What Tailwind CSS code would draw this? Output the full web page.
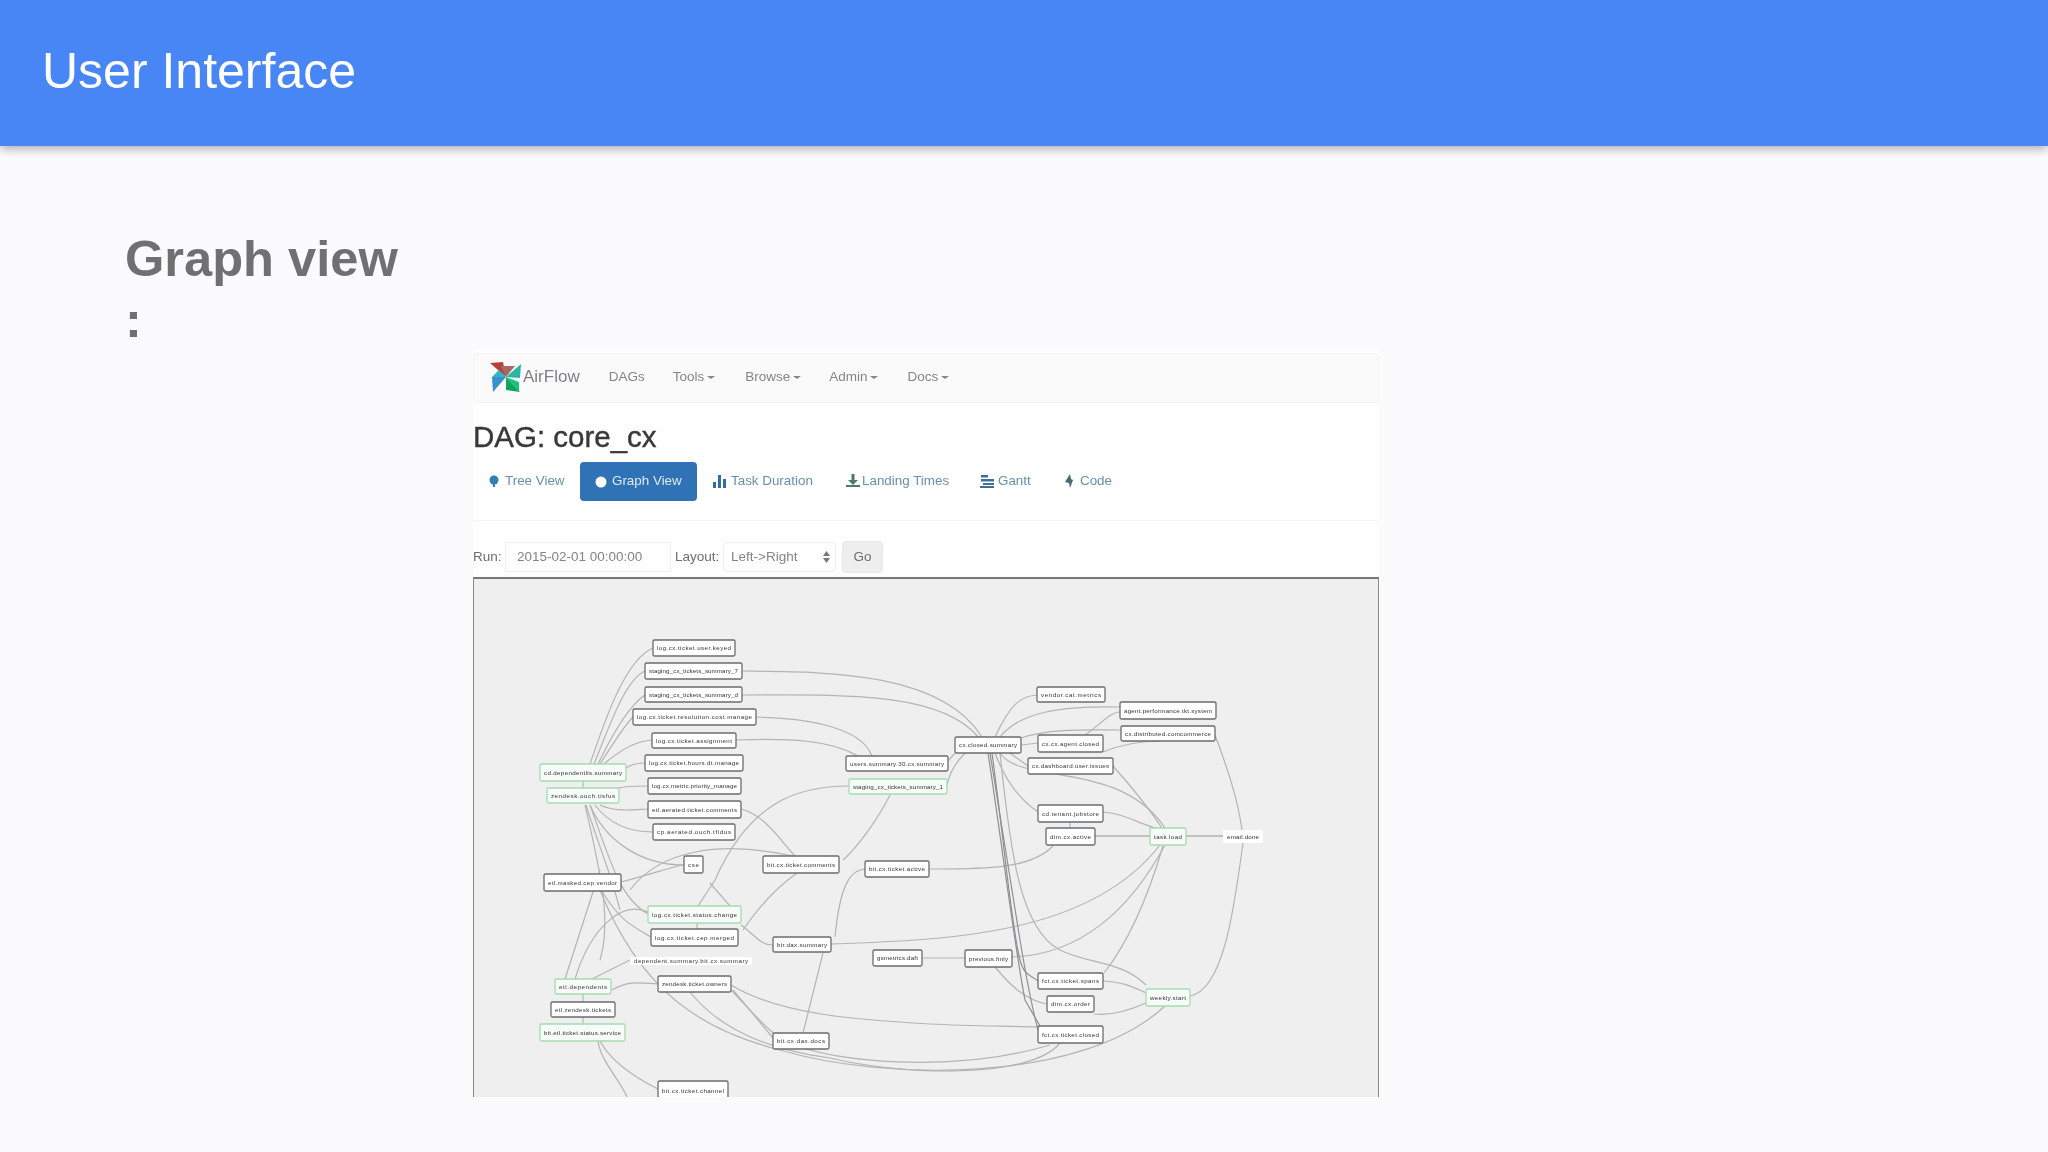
<!DOCTYPE html>
<html lang="en">
<head>
    <meta charset="UTF-8">
    <title>User Interface</title>
    <script src="https://cdn.jsdelivr.net/npm/@tailwindcss/browser@4"></script>
</head>
<body class="bg-[#fbfafc] font-['Liberation_Sans',sans-serif] w-[2048px] h-[1152px] overflow-hidden">
    <header class="h-[146px] bg-[#4885f5] pl-[42px] pt-[41px] shadow-[0_3px_9px_rgba(0,0,0,0.3)] relative">
        <h1 class="text-[50px] leading-[60px] text-white">User Interface</h1>
    </header>

    <main class="pt-[82px]">
        <h2 class="pl-[125px] text-[50.6px] leading-[61px] font-bold text-[#707073] w-[500px]">Graph view<br>:</h2>

        <!-- airflow screenshot -->
        <div class="ml-[473px] w-[906px] h-[747px] bg-[#fefefe] overflow-hidden blur-[0.75px]">
            <nav class="mt-[3px] h-[50px] pb-[2px] bg-[#fbfafb] border border-[#f5f4f5] rounded flex items-center text-[13.5px] text-[#858588]">
                <svg class="ml-[15px] w-[34px] h-[34px]" viewBox="0 0 34 34">
                    <polygon points="17,17 1,3 14,2" fill="#b8403c"/>
                    <polygon points="17,17 12,6 26,6" fill="#a56a66"/>
                    <polygon points="17,17 32,4 31,18" fill="#2bb5a5"/>
                    <polygon points="17,17 31,32 17,30" fill="#12a35c"/>
                    <polygon points="17,17 30,22 30,32" fill="#1fc47c"/>
                    <polygon points="17,17 4,32 3,17" fill="#3a8fd0"/>
                    <polygon points="17,17 3,17 10,10" fill="#2fb3c8"/>
                </svg>
                <span class="text-[17px] text-[#808085]">AirFlow</span>
                <span class="ml-[29px]">DAGs</span>
                <span class="ml-[28px] flex items-center">Tools<i class="ml-[3px] border-x-[4px] border-t-[3px] border-x-transparent border-t-[#858588]"></i></span>
                <span class="ml-[30px] flex items-center">Browse<i class="ml-[3px] border-x-[4px] border-t-[3px] border-x-transparent border-t-[#858588]"></i></span>
                <span class="ml-[28px] flex items-center">Admin<i class="ml-[3px] border-x-[4px] border-t-[3px] border-x-transparent border-t-[#858588]"></i></span>
                <span class="ml-[29px] flex items-center">Docs<i class="ml-[3px] border-x-[4px] border-t-[3px] border-x-transparent border-t-[#858588]"></i></span>
            </nav>

            <div class="mt-[16px] text-[29.5px] leading-[36px] text-[#38383a] [-webkit-text-stroke:0.4px_#38383a]">DAG: core_cx</div>

            <div class="mt-[7px] h-[39px] flex items-center text-[13.4px] text-[#6a8fac]">
                <span class="ml-[15px] flex items-center gap-[5px] w-[92px]">
                    <svg class="w-[12px] h-[12px]" viewBox="0 0 12 12"><circle cx="6" cy="5" r="4.5" fill="#2f7fb0"/><rect x="5" y="8" width="2" height="4" fill="#2f7fb0"/></svg>
                    Tree View
                </span>
                <span class="h-[39px] w-[117px] rounded bg-[#2f72b5] text-[#dfe9f3] flex items-center pl-[15px] gap-[5px]">
                    <svg class="w-[12px] h-[12px]" viewBox="0 0 12 12"><circle cx="6" cy="6" r="5.5" fill="#fff"/></svg>
                    Graph View
                </span>
                <span class="ml-[16px] flex items-center gap-[4px] w-[133px]">
                    <svg class="w-[14px] h-[14px]" viewBox="0 0 14 14" fill="#2f6f9f"><rect x="0" y="8" width="3" height="6"/><rect x="5" y="1" width="3" height="13"/><rect x="10" y="5" width="3" height="9"/></svg>
                    Task Duration
                </span>
                <span class="flex items-center gap-[2px] w-[134px]">
                    <svg class="w-[14px] h-[14px]" viewBox="0 0 14 14" fill="#4a7a70"><rect x="5.5" y="0" width="3" height="7"/><polygon points="2,6 12,6 7,11"/><rect x="0" y="11" width="14" height="2"/></svg>
                    Landing Times
                </span>
                <span class="flex items-center gap-[4px] w-[85px]">
                    <svg class="w-[14px] h-[14px]" viewBox="0 0 14 14" fill="#3f6f94"><rect x="1" y="1" width="7" height="2.5"/><rect x="1" y="5" width="13" height="2.5"/><rect x="3" y="9" width="11" height="2"/><rect x="0" y="12" width="14" height="2"/></svg>
                    Gantt
                </span>
                <span class="flex items-center gap-[7px]">
                    <svg class="w-[8px] h-[14px]" viewBox="0 0 8 14" fill="#4a6a72"><polygon points="5,0 6,5 8,6 5,14 4,9 0,8"/></svg>
                    Code
                </span>
            </div>

            <div class="mt-[19px] border-t border-[#f4f4f5]"></div>

            <form class="mt-[20px] h-[32px] flex items-center text-[13.5px] text-[#6d6d70]">
                <span class="w-[32px]">Run:</span>
                <span class="h-[30px] w-[166px] border border-[#eeeeef] flex items-center pl-[11px] text-[#858588]">2015-02-01 00:00:00</span>
                <span class="ml-[4px] w-[48px]">Layout:</span>
                <span class="h-[30px] w-[113px] border border-[#eeeeef] rounded flex items-center justify-between pl-[7px] pr-[5px] text-[#858588]">
                    Left-&gt;Right
                    <svg class="w-[7px] h-[12px]" viewBox="0 0 7 12" fill="#777"><polygon points="3.5,0 7,5 0,5"/><polygon points="0,7 7,7 3.5,12"/></svg>
                </span>
                <span class="ml-[6px] h-[32px] w-[41px] bg-[#eeeeef] border border-[#e8e8e9] rounded flex items-center justify-center">Go</span>
            </form>

            <!-- dag canvas -->
            <div class="mt-[4px] w-[906px] h-[520px] bg-[#efeff0] border-x border-x-[#8a8a8c] border-t-2 border-t-[#77777a] overflow-hidden">
                <svg class="block -ml-px -mt-[2px]" width="906" height="520" viewBox="473 577 906 520">
                    <g class="fill-none stroke-[#b4b4b6] stroke-[1.2]">
                        <path d="M590 764 C 605 720,625 660,653 648"/>
                        <path d="M594 764 C 610 725,625 680,645 671"/>
                        <path d="M598 764 C 612 735,630 705,645 695"/>
                        <path d="M600 764 C 612 745,625 725,633 717"/>
                        <path d="M604 764 C 620 750,635 741,652 740"/>
                        <path d="M626 768 C 632 764,638 763,645 763"/>
                        <path d="M600 792 C 620 786,635 786,648 786"/>
                        <path d="M600 805 C 615 812,630 810,648 809"/>
                        <path d="M595 805 C 610 825,630 832,653 832"/>
                        <path d="M590 805 C 605 840,640 865,684 865"/>
                        <path d="M621 882 C 650 875,670 867,684 865"/>
                        <path d="M630 890 C 660 850,720 840,793 856"/>
                        <path d="M586 805 C 600 850,610 870,620 910"/>
                        <path d="M590 805 C 610 860,620 900,650 915"/>
                        <path d="M585 805 C 600 870,612 920,600 960"/>
                        <path d="M603 893 C 620 920,630 925,651 937"/>
                        <path d="M565 979 L 600 870"/>
                        <path d="M575 979 C 590 930,620 900,648 912"/>
                        <path d="M590 980 L 630 960"/>
                        <path d="M612 990 C 630 980,640 983,658 984"/>
                        <path d="M600 1041 C 610 1060,630 1075,658 1089"/>
                        <path d="M598 1041 C 600 1060,620 1080,627 1097"/>
                        <path d="M600 890 C 640 990,700 1030,780 1050 C 880 1080,1080 1085,1165 1006"/>
                        <path d="M690 992 C 720 1030,770 1050,830 1058 C 900 1075,1030 1080,1060 1043"/>
                        <path d="M731 990 C 760 1020,775 1040,795 1045 C 830 1060,950 1075,1050 1045"/>
                        <path d="M731 985 C 780 1015,860 1020,930 1024 C 970 1026,1010 1026,1038 1027"/>
                        <path d="M733 990 L 773 1038"/>
                        <path d="M803 1033 L 823 953"/>
                        <path d="M741 925 C 755 935,760 945,773 945"/>
                        <path d="M797 873 C 780 885,760 905,743 930"/>
                        <path d="M865 869 C 850 870,840 885,835 937"/>
                        <path d="M929 869 C 980 869,1030 870,1053 846"/>
                        <path d="M741 809 C 765 815,780 840,795 856"/>
                        <path d="M849 786 C 800 786,750 800,715 880 L 698 906"/>
                        <path d="M710 883 L 730 906"/>
                        <path d="M890 795 C 880 815,860 845,843 860"/>
                        <path d="M742 671 C 820 672,940 670,982 737"/>
                        <path d="M742 695 C 830 695,940 690,978 737"/>
                        <path d="M756 717 C 800 718,860 725,872 756"/>
                        <path d="M736 740 C 790 738,830 740,858 756"/>
                        <path d="M946 763 L 958 750"/>
                        <path d="M947 785 C 950 770,960 758,966 752"/>
                        <path d="M1021 745 L 1038 743"/>
                        <path d="M995 737 C 1010 705,1020 696,1037 695"/>
                        <path d="M1000 737 C 1020 712,1060 706,1120 707"/>
                        <path d="M1021 738 C 1050 728,1090 730,1121 730"/>
                        <path d="M1085 735 C 1100 725,1110 712,1120 712"/>
                        <path d="M1103 752 C 1120 745,1140 741,1160 741"/>
                        <path d="M1010 753 L 1028 766"/>
                        <path d="M995 753 C 1005 780,1020 800,1038 812"/>
                        <path d="M1000 753 C 1020 785,1120 760,1165 828"/>
                        <path d="M1103 812 C 1125 814,1135 822,1155 828"/>
                        <path d="M1113 766 C 1130 785,1150 810,1162 828"/>
                        <path d="M1070 822 L 1070 828"/>
                        <path d="M1215 735 C 1228 770,1238 800,1242 830"/>
                        <path d="M1190 996 C 1225 990,1235 900,1243 843"/>
                        <path d="M1012 957 C 1080 955,1130 910,1165 845"/>
                        <path d="M831 944 C 950 940,1090 935,1160 845"/>
                        <path d="M1104 973 C 1130 940,1150 890,1163 846"/>
                        <path d="M922 958 L 965 958"/>
                        <path d="M995 967 C 1010 985,1025 1000,1047 1004"/>
                        <path d="M1103 981 C 1120 982,1130 985,1146 993"/>
                        <path d="M1094 1014 C 1110 1016,1130 1010,1146 1003"/>
                        <path d="M1000 753 C 1010 850,1020 930,1060 950 C 1090 965,1120 960,1146 985"/>
                    </g>
                    <g class="fill-none stroke-[#8f8f92] stroke-[1.2]">
                        <path d="M990 753 L 1020 940 C 1025 970,1030 1000,1038 1030"/>
                        <path d="M988 753 C 1000 830,1015 950,1025 1000 L 1040 1026"/>
                        <path d="M992 753 C 1005 850,1012 930,1020 960 C 1024 975,1030 975,1038 981"/>
                        <path d="M1095 836 L 1150 836"/>
                        <path d="M1186 836 L 1223 836"/>
                    </g>
                    <g class="fill-none stroke-[#8fcf9f] stroke-[1.2]">
                        <path d="M583 781 L 583 788"/>
                        <path d="M583 994 L 583 1002"/>
                        <path d="M583 1017 L 583 1024"/>
                        <path d="M697 923 L 697 929"/>
                    </g>
                    <g id="nodes"></g>
                </svg>
            </div>
        </div>
    </main>

    <script>
        // x1, y1, x2, y2, label, kind (g = succeeded task, w = no border)
        const nodes = [
            [653, 640, 735, 656, "log.cx.ticket.user.keyed"],
            [645, 663, 742, 679, "staging_cx_tickets_summary_7"],
            [645, 687, 742, 702, "staging_cx_tickets_summary_d"],
            [633, 709, 756, 725, "log.cx.ticket.resolution.cost.manage"],
            [652, 733, 736, 748, "log.cx.ticket.assignment"],
            [645, 755, 743, 771, "log.cx.ticket.hours.dt.manage"],
            [648, 778, 741, 794, "log.cx.metric.priority_manage"],
            [648, 801, 741, 818, "etl.aerated.ticket.comments"],
            [653, 824, 735, 840, "cp.aerated.ouch.tfidus"],
            [684, 856, 703, 873, "cse"],
            [763, 856, 839, 873, "bit.cx.ticket.comments"],
            [865, 861, 929, 877, "bit.cx.ticket.active"],
            [540, 764, 626, 781, "cd.dependentlis.summary", "g"],
            [547, 788, 619, 803, "zendesk.ouch.tisfus", "g"],
            [544, 874, 621, 891, "etl.masked.cep.vendor"],
            [846, 756, 948, 771, "users.summary.30.cx.summary"],
            [849, 779, 947, 794, "staging_cx_tickets_summary_1", "g"],
            [648, 906, 741, 923, "log.cx.ticket.status.change", "g"],
            [651, 929, 738, 946, "log.cx.ticket.cep.merged"],
            [630, 957, 752, 965, "dependent.summary.bit.cx.summary", "w"],
            [658, 976, 731, 992, "zendesk.ticket.owners"],
            [658, 1081, 728, 1100, "bit.cx.ticket.channel"],
            [773, 937, 831, 952, "bir.dax.summary"],
            [873, 950, 922, 966, "gsmetrics.daft"],
            [555, 979, 611, 994, "etl.dependents", "g"],
            [551, 1002, 615, 1017, "etl.zendesk.tickets"],
            [540, 1024, 625, 1041, "bit.etl.ticket.status.service", "g"],
            [773, 1033, 829, 1049, "bit.cx.dax.docs"],
            [955, 737, 1021, 753, "cx.closed.summary"],
            [1037, 687, 1105, 702, "vendor.cat.metrics"],
            [1120, 702, 1216, 719, "agent.performance.tkt.system"],
            [1121, 726, 1215, 741, "cx.distributed.comcommerce"],
            [1038, 735, 1103, 752, "cx.cx.agent.closed"],
            [1028, 758, 1113, 774, "cx.dashboard.user.issues"],
            [1038, 805, 1103, 822, "cd.tenant.jobstore"],
            [1046, 828, 1095, 845, "dim.cx.active"],
            [1150, 828, 1186, 845, "task.load", "g"],
            [1223, 830, 1263, 843, "email.done", "w"],
            [965, 950, 1012, 967, "previous.fmly"],
            [1038, 973, 1103, 989, "fct.cx.ticket.spans"],
            [1047, 996, 1094, 1012, "dim.cx.order"],
            [1038, 1026, 1103, 1043, "fct.cx.ticket.closed"],
            [1146, 989, 1190, 1006, "weekly.start", "g"]
        ];

        document.getElementById("nodes").innerHTML = nodes.map(([x1, y1, x2, y2, label, kind]) => {
            const stroke = kind === "g" ? "#a4dcae" : kind === "w" ? "none" : "#6a6c6d";
            const fill = kind === "g" ? "#f8fcf8" : "#ffffff";
            return `<rect x="${x1}" y="${y1}" width="${x2 - x1}" height="${y2 - y1}" rx="1.5" fill="${fill}" stroke="${stroke}" stroke-width="1.3"/>` +
                `<text x="${x1 + 4}" y="${(y1 + y2) / 2 + 2.2}" font-size="6.2" fill="#333" textLength="${x2 - x1 - 8}">${label}</text>`;
        }).join("");
    </script>
</body>
</html>
